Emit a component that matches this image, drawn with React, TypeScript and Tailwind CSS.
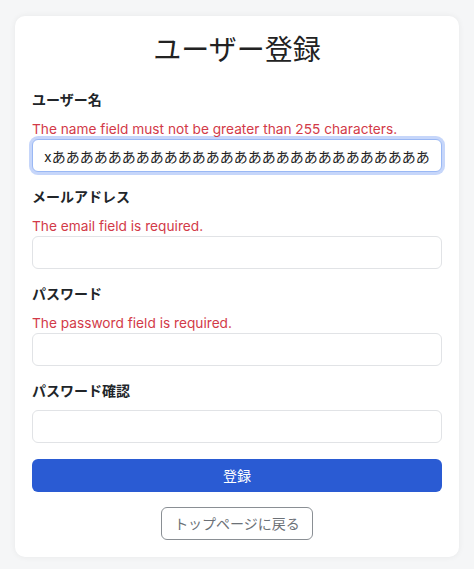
import React from 'react';

interface Field {
  label: string;
  type: string;
  error?: string;
  value?: string;
  focused?: boolean;
}

const fields: Field[] = [
  {
    label: 'ユーザー名',
    type: 'text',
    error: 'The name field must not be greater than 255 characters.',
    value: 'x' + 'あ'.repeat(120),
    focused: true,
  },
  { label: 'メールアドレス', type: 'email', error: 'The email field is required.' },
  { label: 'パスワード', type: 'password', error: 'The password field is required.' },
  { label: 'パスワード確認', type: 'password' },
];

export default function App() {
  return (
    <div
      className="min-h-[569px] bg-[#f5f6f7] pt-[16px] px-[15px] pb-[12px] text-[#212529]"
      style={{ fontFamily: 'Inter, "Noto Sans CJK JP", sans-serif' }}
    >
      <div className="bg-white rounded-[10px] shadow-[0_0_6px_rgba(0,0,0,0.06)] px-[17px] pt-[17px] pb-[17px]">
        <h1 className="text-center text-[28px] leading-[34px] font-normal text-[#222] mb-[23px]">ユーザー登録</h1>

        {fields.map((f, i) => (
          <div key={i} className={i === fields.length - 1 ? 'mb-[16px]' : 'mb-[15px]'}>
            <label className="block text-[14px] leading-[20px] font-bold mb-[9px]">{f.label}</label>
            {f.error && <p className="text-[13.7px] leading-[20px] text-[#d23a48]">{f.error}</p>}
            <input
              type={f.type}
              readOnly
              defaultValue={f.value}
              className={
                'block w-full h-[33px] rounded-[6px] border bg-white px-[11px] text-[14px] text-[#222] outline-none ' +
                (f.focused
                  ? 'border-[#9ab8f4] shadow-[0_0_0_3px_rgba(66,120,240,0.3)]'
                  : 'border-[#e1e3e6]')
              }
            />
          </div>
        ))}

        <button className="block w-full h-[33px] rounded-[6px] bg-[#2a5bd3] text-white text-[14px]">登録</button>

        <div className="flex justify-center mt-[15px]">
          <button className="h-[33px] px-[12px] rounded-[6px] border border-[#8a8f94] text-[#6c7177] text-[14px] bg-white">
            トップページに戻る
          </button>
        </div>
      </div>
    </div>
  );
}
